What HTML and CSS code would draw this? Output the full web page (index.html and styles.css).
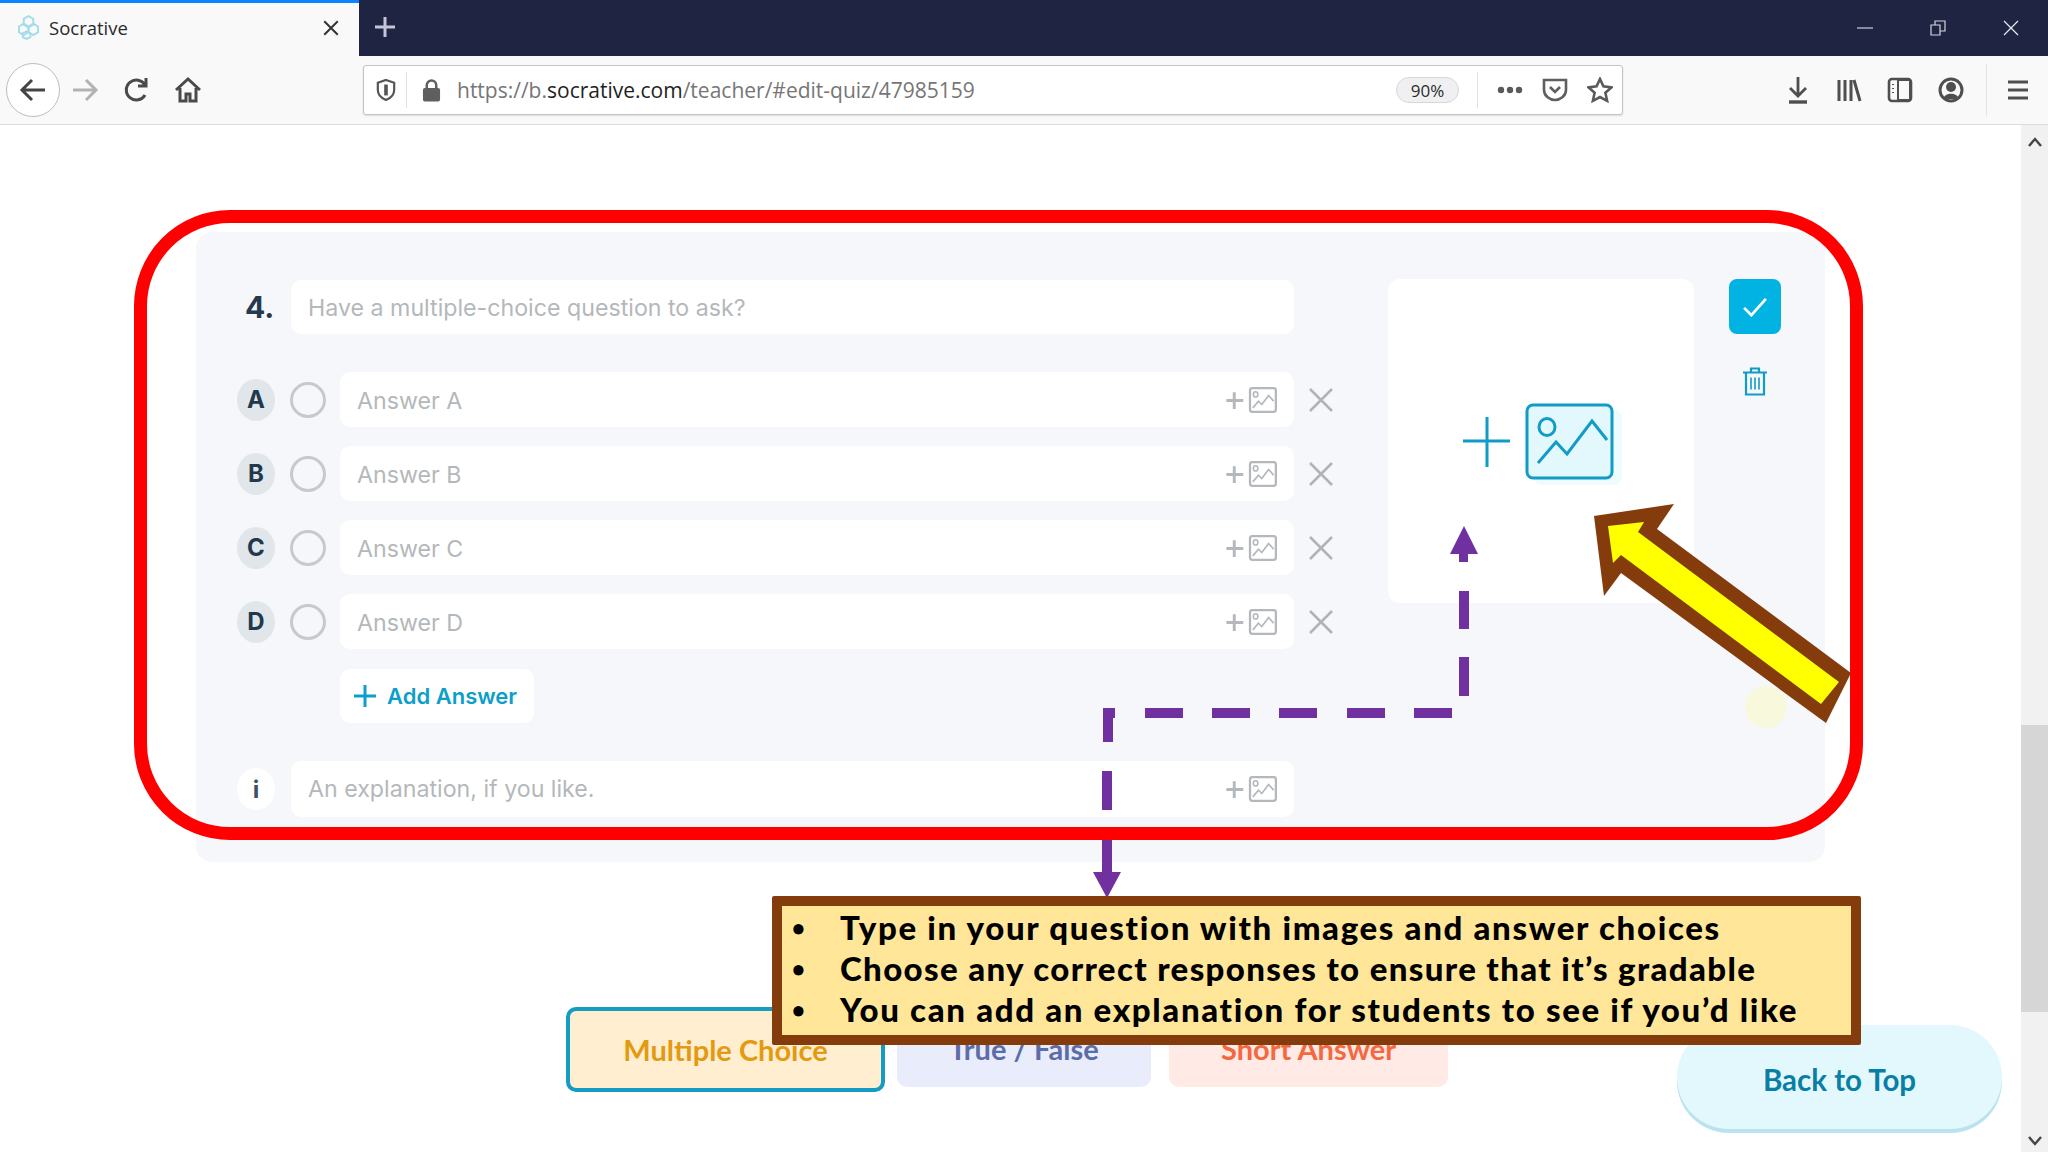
FILE: index.html
```html
<!DOCTYPE html>
<html lang="en">
<head>
<meta charset="utf-8">
<title>Socrative</title>
<link rel="stylesheet" href="styles.css">
</head>
<body>
<svg class="defs" width="0" height="0">
  <defs>
    <symbol id="img-small" viewBox="0 0 48 32">
      <path d="M10 9v15M3 16.500h15" fill="none" stroke="currentColor" stroke-width="2.600"/>
      <rect x="24" y="5.500" width="23" height="21" rx="2" fill="none" stroke="currentColor" stroke-width="2"/>
      <ellipse cx="29" cy="11" rx="2" ry="2.400" fill="none" stroke="currentColor" stroke-width="1.400"/>
      <path d="M26.500 23l5-6 3 3 6-8 4.500 5" fill="none" stroke="currentColor" stroke-width="1.500"/>
    </symbol>
    <symbol id="cross" viewBox="0 0 26 26">
      <path d="M2 2l22 22M24 2L2 24" fill="none" stroke="currentColor" stroke-width="2.600"/>
    </symbol>
  </defs>
</svg>

<header class="tabstrip">
  <div class="tab">
    <svg class="favicon" viewBox="0 0 22 26"><g fill="none" stroke="#a5dcea" stroke-width="2"><path d="M11 1l5 3v6l-5 3-5-3V4z"/><path d="M16 9l5 3v6l-5 3-5-3v-6z"/><path d="M6 9l5 3v6l-5 3-5-3v-6z"/><path d="M9 17l4 2v4l-4 2-4-2v-4z"/></g></svg>
    <span class="tab-title">Socrative</span>
    <svg class="tab-close" viewBox="0 0 16 16"><path d="M2 2l12 12M14 2L2 14" fill="none" stroke="#333" stroke-width="1.800"/></svg>
  </div>
  <svg class="newtab" viewBox="0 0 22 22"><path d="M11 1v20M1 11h20" fill="none" stroke="#c4c6d8" stroke-width="3"/></svg>
  <div class="winctl">
    <svg class="winicon" viewBox="0 0 16 16"><path d="M0 8h16" stroke="#b5b8c8" stroke-width="1.400"/></svg>
    <svg class="winicon" viewBox="0 0 16 16"><path d="M1 5h9v10H1zM5 5V1h10v10h-5" fill="none" stroke="#d5d6e0" stroke-width="1.200"/></svg>
    <svg class="winicon" viewBox="0 0 16 16"><path d="M1 1l14 14M15 1L1 15" stroke="#e6e7ee" stroke-width="1.300"/></svg>
  </div>
</header>

<nav class="toolbar">
  <span class="backbtn"><svg class="tool-ico" viewBox="0 0 28 28"><path d="M26 14H3M13 4L3 14l10 10" fill="none" stroke="#444" stroke-width="3"/></svg></span>
  <svg class="tool-ico fwd" viewBox="0 0 28 28"><path d="M2 14h23M15 4l10 10-10 10" fill="none" stroke="#b3b3b3" stroke-width="3"/></svg>
  <svg class="tool-ico reload" viewBox="0 0 28 28"><path d="M22 19a10 10 0 1 1 0-10M23 2v8h-8" fill="none" stroke="#4a4a4a" stroke-width="3"/></svg>
  <svg class="tool-ico home" viewBox="0 0 28 28"><path d="M2 14L14 3l12 11M6 12v13h6v-7h4v7h6V12" fill="none" stroke="#4a4a4a" stroke-width="3"/></svg>
  <div class="urlbar">
    <svg class="url-shield" viewBox="0 0 22 24"><path d="M11 1l9 3v8c0 6-4 9-9 11-5-2-9-5-9-11V4z" fill="none" stroke="#555" stroke-width="2.400"/><path d="M11 6v12" stroke="#555" stroke-width="4"/></svg>
    <span class="url-sep"></span>
    <svg class="url-lock" viewBox="0 0 20 24"><rect x="1" y="10" width="18" height="14" rx="2" fill="#5f5f5f"/><path d="M5 11V7a5 5 0 0 1 10 0v4" fill="none" stroke="#5f5f5f" stroke-width="2.600"/></svg>
    <span class="url-text">https://b.<b class="url-host">socrative.com</b>/teacher/#edit-quiz/47985159</span>
    <span class="zoom-pill">90%</span>
    <span class="url-sep sep-right"></span>
    <svg class="url-dots" viewBox="0 0 26 8"><g fill="#5a5a5a"><circle cx="4" cy="4" r="3.200"/><circle cx="13" cy="4" r="3.200"/><circle cx="22" cy="4" r="3.200"/></g></svg>
    <svg class="url-pocket" viewBox="0 0 26 24"><path d="M2 2h22v10c0 6-6 10-11 10S2 18 2 12z" fill="none" stroke="#5f5f5f" stroke-width="2.600"/><path d="M8 9l5 5 5-5" fill="none" stroke="#5f5f5f" stroke-width="2.600"/></svg>
    <svg class="url-star" viewBox="0 0 26 26"><path d="M13 2l3.400 7.400 8 1-6 5.400 1.700 8L13 20l-7.100 3.800 1.700-8-6-5.400 8-1z" fill="none" stroke="#5a5a5a" stroke-width="2.600"/></svg>
  </div>
  <div class="toolbar-right">
    <svg class="tool-ico" viewBox="0 0 28 28"><path d="M14 1v19M6 12l8 8 8-8" fill="none" stroke="#4f4f4f" stroke-width="2.800"/><path d="M5 26h18" stroke="#4f4f4f" stroke-width="3.400"/></svg>
    <svg class="tool-ico" viewBox="0 0 28 28"><path d="M4 4v21M10 4v21M16 4v21M19 4l6 21" fill="none" stroke="#4f4f4f" stroke-width="3"/></svg>
    <svg class="tool-ico" viewBox="0 0 28 28"><rect x="3" y="3" width="22" height="22" rx="3" fill="none" stroke="#4f4f4f" stroke-width="2.600"/><path d="M12 4h12v20H12z" fill="none" stroke="#4f4f4f" stroke-width="2"/><path d="M7 8v1M7 12v1M7 16v1" stroke="#4f4f4f" stroke-width="2"/></svg>
    <svg class="tool-ico" viewBox="0 0 28 28"><circle cx="14" cy="14" r="11" fill="none" stroke="#4f4f4f" stroke-width="3"/><circle cx="14" cy="11" r="5" fill="#4f4f4f"/><path d="M6 23c2-7 14-7 16 0" fill="#4f4f4f"/></svg>
    <span class="toolbar-divider"></span>
    <svg class="tool-ico burger" viewBox="0 0 28 28"><path d="M4 6h20M4 14h20M4 22h20" stroke="#4f4f4f" stroke-width="3.200"/></svg>
  </div>
</nav>

<div class="viewport">
  <main class="page">
    <section class="card">
      <div class="card-main">
        <div class="q-row">
          <span class="q-num">4.</span>
          <div class="field q-field">Have a multiple-choice question to ask?</div>
        </div>
        <div class="answers">
          <div class="a-row">
            <span class="badge">A</span><span class="radio"></span>
            <div class="field a-field"><span class="grow a-text">Answer A</span><svg class="img-small"><use href="#img-small"/></svg></div>
            <svg class="cross"><use href="#cross"/></svg>
          </div>
          <div class="a-row">
            <span class="badge">B</span><span class="radio"></span>
            <div class="field a-field"><span class="grow a-text">Answer B</span><svg class="img-small"><use href="#img-small"/></svg></div>
            <svg class="cross"><use href="#cross"/></svg>
          </div>
          <div class="a-row">
            <span class="badge">C</span><span class="radio"></span>
            <div class="field a-field"><span class="grow a-text">Answer C</span><svg class="img-small"><use href="#img-small"/></svg></div>
            <svg class="cross"><use href="#cross"/></svg>
          </div>
          <div class="a-row">
            <span class="badge">D</span><span class="radio"></span>
            <div class="field a-field"><span class="grow a-text">Answer D</span><svg class="img-small"><use href="#img-small"/></svg></div>
            <svg class="cross"><use href="#cross"/></svg>
          </div>
        </div>
        <div class="add-answer">
          <svg class="add-plus" viewBox="0 0 24 24"><path d="M12 1v22M1 12h22" stroke="#0d9fc9" stroke-width="3"/></svg>
          <span>Add Answer</span>
        </div>
        <div class="e-row">
          <span class="badge badge-i">i</span>
          <div class="field e-field"><span class="grow">An explanation, if you like.</span><svg class="img-small"><use href="#img-small"/></svg></div>
        </div>
      </div>
      <div class="media">
        <svg class="media-ico" viewBox="0 0 150 78">
          <path d="M21 14v50M-3 38h47" fill="none" stroke="#109cc6" stroke-width="3"/>
          <rect x="68" y="7" width="88" height="75" rx="8" fill="#eefbff"/>
          <rect x="61" y="2" width="85" height="73" rx="6" fill="#e3f8fd" stroke="#109cc6" stroke-width="3"/>
          <ellipse cx="81" cy="24" rx="8" ry="8.500" fill="none" stroke="#109cc6" stroke-width="3"/>
          <path d="M72 60l18-21 11 12 25-33 15 19" fill="none" stroke="#109cc6" stroke-width="3"/>
        </svg>
      </div>
      <div class="actions">
        <span class="check"><svg class="check-ico" viewBox="0 0 28 22"><path d="M2 12l8 8L26 2" fill="none" stroke="#fff" stroke-width="3"/></svg></span>
        <svg class="trash" viewBox="0 0 26 30"><g fill="none" stroke="#109cc6" stroke-width="2.200"><path d="M1 6h24M9 6V2h8v4M4 6v22h18V6"/><path d="M9 11v12M13 11v12M17 11v12" stroke-width="1.600"/></g></svg>
      </div>
    </section>
    <div class="types">
      <span class="type type-mc">Multiple Choice</span>
      <span class="type type-tf">True / False</span>
      <span class="type type-sa">Short Answer</span>
    </div>
    <span class="back-top">Back to Top</span>
  </main>
  <aside class="scrollbar">
    <svg class="sb-arrow" viewBox="0 0 14 10"><path d="M1 9l6-7 6 7" fill="none" stroke="#444" stroke-width="2.400"/></svg>
    <span class="sb-thumb"></span>
    <svg class="sb-arrow" viewBox="0 0 14 10"><path d="M1 1l6 7 6-7" fill="none" stroke="#444" stroke-width="2.400"/></svg>
  </aside>
</div>

<span class="pointer-glow"></span>
<svg class="annot" viewBox="0 0 2048 1152">
  <polygon fill="#843c0c" points="1594,516 1674,504 1657,529 1851,673 1826,723 1621,573 1604,596"/>
  <polygon fill="#ffff00" points="1608,526 1644,522 1638,532 1839,682 1821,704 1621,555 1613,563"/>
  <g fill="#7030a0">
    <polygon points="1464,526 1478,554 1468,554 1468,562 1459,562 1459,554 1450,554"/>
    <rect x="1459" y="591" width="10" height="38"/>
    <rect x="1459" y="657" width="10" height="39"/>
    <rect x="1414" y="708" width="38" height="10"/>
    <rect x="1347" y="708" width="38" height="10"/>
    <rect x="1279" y="708" width="38" height="10"/>
    <rect x="1212" y="708" width="38" height="10"/>
    <rect x="1145" y="708" width="38" height="10"/>
    <rect x="1103" y="708" width="12" height="10"/>
    <rect x="1103" y="708" width="10" height="34"/>
    <rect x="1102" y="771" width="10" height="39"/>
    <rect x="1102" y="836" width="10" height="38"/>
    <polygon points="1093,872 1121,872 1107,898"/>
  </g>
</svg>
<div class="red-frame"></div>
<div class="callout">
  <ul class="callout-list">
    <li>Type in your question with images and answer choices</li>
    <li class="tight">Choose any correct responses to ensure that it’s gradable</li>
    <li>You can add an explanation for students to see if you’d like</li>
  </ul>
</div>
</body>
</html>
```

FILE: styles.css
```css
* { box-sizing: border-box; }
html, body { margin: 0; height: 1152px; overflow: hidden; background: #fff; }
body { position: relative; width: 2048px; font-family: "Inter", "Liberation Sans", sans-serif; display: flex; flex-direction: column; }
.defs { position: absolute; }

/* browser chrome */
.tabstrip { height: 56px; background: #1f2442; display: flex; align-items: center; flex: none; }
.tab { width: 359px; height: 56px; background: #f9f9fa; border-top: 3px solid #0a84ff; display: flex; align-items: center; padding: 0 18px 4px; }
.favicon { width: 21px; height: 25px; }
.tab-title { margin-left: 10px; font: 400 18.5px "Open Sans", sans-serif; color: #2b2b2b; flex: 1; }
.tab-close { width: 18px; height: 18px; margin-right: 1px; }
.newtab { width: 22px; height: 22px; margin: 0 0 2px 15px; }
.winctl { margin-left: auto; display: flex; gap: 57px; padding-right: 29px; }
.winicon { width: 16px; height: 16px; }

.toolbar { height: 69px; background: #f9f9fa; border-bottom: 1px solid #dcdcdf; display: flex; align-items: center; flex: none; padding-left: 6px; position: relative; }
.tool-ico { width: 28px; height: 28px; flex: none; }
.backbtn { width: 54px; height: 54px; border-radius: 50%; background: #fff; border: 1px solid #bdbdbd; display: flex; align-items: center; justify-content: center; }
.fwd { margin-left: 11px; }
.reload { margin-left: 24px; }
.home { margin-left: 23px; }
.urlbar { width: 1260px; height: 50px; background: #fff; border: 1px solid #c4c4c6; border-radius: 3px; box-shadow: 0 1px 2px rgba(0,0,0,.12); display: flex; align-items: center; padding-left: 12px; margin-left: 161px; }
.url-shield { width: 20px; height: 24px; flex: none; }
.url-sep { width: 1px; height: 36px; background: #e2e2e4; margin-left: 10px; flex: none; }
.url-lock { width: 19px; height: 24px; margin-left: 15px; flex: none; }
.url-text { margin-left: 16px; font: 400 21px "Open Sans", sans-serif; color: #767676; flex: 1; white-space: nowrap; }
.url-host { font-weight: 400; color: #1f1f1f; }
.zoom-pill { width: 63px; height: 26px; border-radius: 13px; background: #f0f0f2; border: 1px solid #d8d8da; font: 400 17px "Open Sans", sans-serif; color: #2b2b2b; display: flex; align-items: center; justify-content: center; flex: none; }
.sep-right { margin-left: 18px; }
.url-dots { width: 26px; height: 8px; margin-left: 19px; flex: none; }
.url-pocket { width: 26px; height: 24px; margin-left: 19px; flex: none; }
.url-star { width: 26px; height: 26px; margin-left: 19px; margin-right: 9px; flex: none; }
.toolbar-right { margin-left: auto; display: flex; align-items: center; gap: 23px; padding-right: 16px; }
.toolbar-divider { width: 1px; height: 52px; background: #e4e4e6; margin: 0 -6px 0 -2px; }

/* page */
.viewport { flex: 1; display: flex; min-height: 0; }
.page { flex: 1; position: relative; padding: 107px 0 0 196px; min-width: 0; }
.scrollbar { width: 27px; background: #f1f1f1; display: flex; flex-direction: column; align-items: center; padding: 12px 0 6px; }
.sb-arrow { width: 14px; height: 10px; flex: none; }
.sb-thumb { width: 100%; height: 287px; background: #d6d6d6; margin-top: 578px; margin-bottom: auto; }

.card { width: 1629px; height: 630px; background: #f6f7fa; border-radius: 16px; display: flex; padding-top: 48px; }
.card-main { width: 1192px; }
.field { background: #fff; border-radius: 10px; color: #b4b8bb; font-size: 23.2px; display: flex; align-items: center; }
.grow { flex: 1; }
.a-text { padding-top: 2px; }
.q-row { display: flex; align-items: center; padding-left: 49px; height: 54px; }
.q-num { width: 46px; font: 700 30px "Inter", sans-serif; color: #263a4d; }
.q-field { width: 1003px; height: 54px; padding: 2px 0 0 17px; }
.answers { display: flex; flex-direction: column; gap: 19px; margin-top: 38px; }
.a-row { display: flex; align-items: center; padding-left: 41px; height: 55px; }
.badge { width: 38px; height: 42px; border-radius: 50%; background: #e0e6ea; color: #22384c; font: 700 24px "Inter", sans-serif; display: flex; align-items: center; justify-content: center; flex: none; }
.radio { width: 36px; height: 36px; border-radius: 50%; border: 3px solid #c6cacd; margin-left: 15px; flex: none; }
.a-field { width: 954px; height: 55px; padding: 0 16px 0 17px; margin-left: 14px; }
.img-small { width: 56px; height: 36px; color: #b4b8bc; flex: none; }
.cross { width: 26px; height: 26px; margin-left: 14px; color: #b0b4b8; flex: none; }
.add-answer { margin: 20px 0 0 144px; width: 194px; height: 54px; background: #fff; border-radius: 10px; display: flex; align-items: center; padding-left: 13px; gap: 10px; color: #0d9fc9; font-size: 22px; font-weight: 600; }
.add-plus { width: 24px; height: 24px; }
.e-row { display: flex; align-items: center; padding-left: 41px; margin-top: 38px; }
.badge-i { background: #fff; color: #3c5165; }
.e-field { width: 1003px; height: 56px; margin-left: 16px; padding: 0 16px 0 17px; }
.media { width: 306px; height: 324px; background: #fff; border-radius: 12px; display: flex; justify-content: center; padding-top: 124px; margin-top: -1px; }
.media-ico { width: 150px; height: 78px; overflow: visible; }
.actions { margin: -1px 0 0 35px; width: 52px; display: flex; flex-direction: column; align-items: center; gap: 32px; }
.check { width: 52px; height: 55px; border-radius: 8px; background: #00b3e3; display: flex; align-items: center; justify-content: center; }
.check-ico { width: 26px; height: 20px; }
.trash { width: 26px; height: 31px; }

.types { display: flex; align-items: flex-start; margin: 145px 0 0 370px; }
.type { height: 80px; padding-top: 3px; border-radius: 10px; display: flex; align-items: center; justify-content: center; font: 700 29px "Lato", sans-serif; }
.type-mc { width: 319px; height: 85px; padding-top: 0; background: #ffeed0; border: 4px solid #149cc4; color: #e39a10; }
.type-tf { width: 254px; margin-left: 12px; background: #e9ecfb; color: #5c6ca8; }
.type-sa { width: 279px; margin-left: 18px; background: #ffeae6; color: #f5683f; }
.back-top { position: absolute; left: 1677px; top: 900px; width: 325px; height: 108px; border-radius: 52px; background: #e3f8fd; box-shadow: inset 0 -4px 0 #b9e4ef; color: #0a7fa6; font: 700 29.5px "Lato", sans-serif; display: flex; align-items: center; justify-content: center; }

/* annotations drawn over the recording */
.pointer-glow { position: absolute; left: 1745px; top: 686px; width: 42px; height: 42px; border-radius: 50%; background: rgba(250,250,200,.6); }
.annot { position: absolute; left: 0; top: 0; width: 2048px; height: 1152px; }
.red-frame { position: absolute; left: 134px; top: 210px; width: 1729px; height: 630px; border: 13px solid #ff0000; border-radius: 96px; }
.callout { position: absolute; left: 772px; top: 896px; width: 1089px; height: 149px; background: #ffe699; border: 10px solid #843c0c; border-radius: 2px; }
.callout-list { list-style: none; margin: 0; padding: 1px 0 0 10px; font: 900 33px/41px "Lato", sans-serif; letter-spacing: 1.65px; color: #000; }
.callout-list li { display: flex; white-space: nowrap; }
.callout-list li.tight { letter-spacing: 1.35px; }
.callout-list li::before { content: "•"; width: 48px; flex: none; font-size: 22px; }
```
